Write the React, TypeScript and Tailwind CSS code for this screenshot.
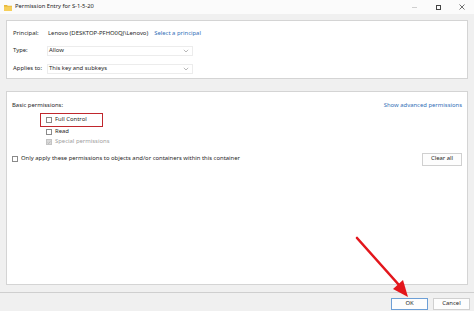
import React from "react";

function Chevron() {
  return (
    <svg width="6" height="4" viewBox="0 0 6 4" className="text-[#888]">
      <path d="M0.8 0.8 L3 3 L5.2 0.8" fill="none" stroke="currentColor" strokeWidth="0.6" />
    </svg>
  );
}

function Box({ checked, disabled }: { checked?: boolean; disabled?: boolean }) {
  return (
    <span
      className={`flex h-[6px] w-[6px] shrink-0 items-center justify-center border ${
        disabled ? "border-[#c4c4c4] bg-[#d9d9d9]" : "border-[#8a8a8a] bg-white"
      }`}
    >
      {checked ? (
        <svg width="5" height="5" viewBox="0 0 5 5">
          <path d="M0.8 2.6 L2 3.7 L4.2 1.2" fill="none" stroke="#a9a9a9" strokeWidth="0.8" />
        </svg>
      ) : null}
    </span>
  );
}

function Dropdown({ value }: { value: string }) {
  return (
    <div className="flex h-[10px] w-[146px] items-center justify-between border border-[#ececec] bg-white pl-[1px] pr-[3px]">
      <span>{value}</span>
      <Chevron />
    </div>
  );
}

export default function App() {
  return (
    <div
      className="relative flex h-[311px] w-[474px] flex-col overflow-hidden bg-[#f0f0f0] text-[5.9px] leading-none text-[#262626]"
      style={{ fontFamily: '"Noto Sans", "Open Sans", sans-serif' }}
    >
      {/* title bar */}
      <div className="flex h-[14px] shrink-0 items-center bg-[#fbfbfb] pl-[4px]">
        <svg width="8" height="7" viewBox="0 0 8 7" className="mr-[3px]">
          <path d="M0 1 H3 L3.8 1.8 H8 V7 H0 Z" fill="#e8b83a" />
          <path d="M0 2.6 H8 V7 H0 Z" fill="#f6cf5a" />
        </svg>
        <span className="text-[5.8px] text-[#222]">Permission Entry for S-1-5-20</span>
        <div className="ml-auto flex h-full items-center">
          <span className="flex w-[24px] justify-center">
            <span className="h-px w-[5px] bg-[#cfcfcf]" />
          </span>
          <span className="flex w-[24px] justify-center">
            <span className="h-[5px] w-[5px] border border-[#444]" />
          </span>
          <span className="flex w-[24px] justify-center text-[#333]">
            <svg width="6" height="6" viewBox="0 0 6 6">
              <path d="M0.5 0.5 L5.5 5.5 M5.5 0.5 L0.5 5.5" stroke="currentColor" strokeWidth="0.7" />
            </svg>
          </span>
        </div>
      </div>

      <div className="flex flex-1 flex-col px-[6px] pt-[6px]">
        {/* top panel */}
        <div className="flex h-[59px] flex-col border border-[#d4d4d4] bg-white pl-[6px] pt-[8px]">
          <div className="flex h-[10px] items-center">
            <span className="w-[35px]">Principal:</span>
            <span>Lenovo (DESKTOP-PFHO0QJ\Lenovo)</span>
            <span className="ml-[6px] text-[#2f6fb7]">Select a principal</span>
          </div>
          <div className="mt-[7px] flex h-[10px] items-center">
            <span className="w-[34px]">Type:</span>
            <Dropdown value="Allow" />
          </div>
          <div className="mt-[8px] flex h-[10px] items-center">
            <span className="w-[34px]">Applies to:</span>
            <Dropdown value="This key and subkeys" />
          </div>
        </div>

        {/* permissions panel */}
        <div className="mt-[12px] flex h-[194px] flex-col border border-[#d4d4d4] bg-white pl-[5px] pr-[5px] pt-[11px]">
          <div className="flex items-center justify-between">
            <span>Basic permissions:</span>
            <span className="text-[#2f6fb7]">Show advanced permissions</span>
          </div>
          <div className="ml-[28px] mt-[4px] flex h-[14px] w-[63px] items-center border-[1.5px] border-[#c0272d] pl-[5px]">
            <Box />
            <span className="ml-[3px]">Full Control</span>
          </div>
          <div className="ml-[34px] mt-[1px] flex h-[9px] items-center">
            <Box />
            <span className="ml-[3px]">Read</span>
          </div>
          <div className="ml-[34px] mt-[1px] flex h-[9px] items-center text-[#a0a0a0]">
            <Box checked disabled />
            <span className="ml-[3px]">Special permissions</span>
          </div>
          <div className="mt-[6px] flex items-center justify-between">
            <div className="flex items-center">
              <Box />
              <span className="ml-[3px]">
                Only apply these permissions to objects and/or containers within this container
              </span>
            </div>
            <button className="flex h-[13px] w-[40px] items-center justify-center border border-[#d0d0d0] bg-[#fdfdfd]">
              Clear all
            </button>
          </div>
        </div>
      </div>

      {/* footer */}
      <div className="mt-[6px] flex h-[19px] shrink-0 items-start justify-end gap-[5px] border-t border-[#cfcfcf] pr-[4px] pt-[5px]">
        <button className="flex h-[12px] w-[37px] items-center justify-center border border-[#6d9fd6] bg-[#fdfdfd]">
          OK
        </button>
        <button className="flex h-[12px] w-[37px] items-center justify-center border border-[#d0d0d0] bg-[#fdfdfd]">
          Cancel
        </button>
      </div>

      {/* red annotation arrow */}
      <svg className="pointer-events-none absolute left-0 top-0" width="474" height="311" viewBox="0 0 474 311">
        <line x1="357" y1="238" x2="399" y2="285" stroke="#e3161c" strokeWidth="2.6" strokeLinecap="round" />
        <path d="M408 297 L393 289 L403 280 Z" fill="#e3161c" />
      </svg>
    </div>
  );
}
